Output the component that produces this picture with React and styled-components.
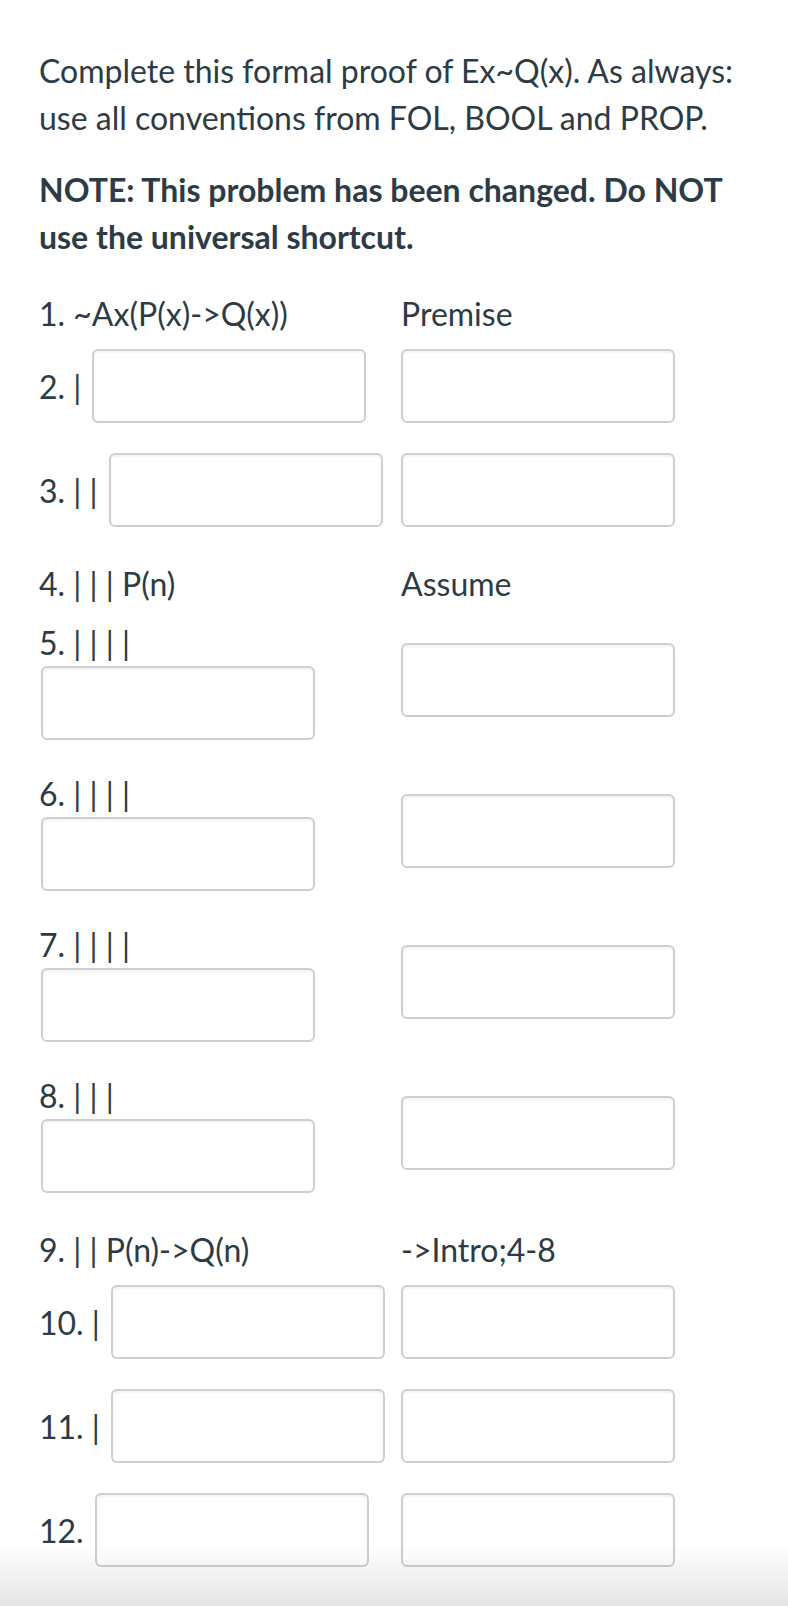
import React from "react";
import styled, { createGlobalStyle } from "styled-components";

const GlobalStyle = createGlobalStyle`
  html, body {
    margin: 0;
    padding: 0;
    background: #ffffff;
  }
  body {
    font-family: Lato, "Open Sans", "Noto Sans", sans-serif;
    color: #2d3b45;
  }
`;

const Page = styled.div`
  padding: 47px 50px 40px 39px;
  font-size: 32px;
  line-height: 47px;
`;

const Paragraph = styled.p`
  margin: 0 0 ${(p) => p.$after}px;
  font-weight: ${(p) => (p.$bold ? 700 : 400)};
`;

const Row = styled.div`
  display: grid;
  grid-template-columns: 362px 1fr;
  align-items: center;
  padding: ${(p) => (p.$text ? "22px 0 0" : "15px 0")};
  line-height: ${(p) => (p.$text ? "40px" : "47px")};
`;

const LeftCell = styled.div`
  display: flex;
  flex-direction: ${(p) => (p.$stack ? "column" : "row")};
  align-items: ${(p) => (p.$stack ? "flex-start" : "center")};
  gap: ${(p) => (p.$stack ? "0" : "9px")};
`;

const Label = styled.span`
  white-space: pre;
`;

const Answer = styled.input`
  box-sizing: border-box;
  width: 274px;
  height: 74px;
  margin: 0;
  padding: 0 12px;
  border: 2px solid #cfcfcf;
  border-radius: 6px;
  background: #ffffff;
  box-shadow: inset 0 2px 2px rgba(0, 0, 0, 0.05);
  font-family: inherit;
  font-size: 24px;
  color: #2d3b45;
  outline: none;
`;

const FormulaInput = styled(Answer)`
  margin-left: 2px;
`;

const RightCell = styled.div`
  display: flex;
  align-items: center;
`;

const BottomFade = styled.div`
  position: fixed;
  left: 0;
  right: 0;
  bottom: 0;
  height: 62px;
  pointer-events: none;
  background: linear-gradient(rgba(0, 0, 0, 0), rgba(0, 0, 0, 0.1));
`;

const steps = [
  { n: "1.", bars: 0, text: "~Ax(P(x)->Q(x))", rule: "Premise" },
  { n: "2.", bars: 1 },
  { n: "3.", bars: 2 },
  { n: "4.", bars: 3, text: "P(n)", rule: "Assume" },
  { n: "5.", bars: 4, stack: true },
  { n: "6.", bars: 4, stack: true },
  { n: "7.", bars: 4, stack: true },
  { n: "8.", bars: 3, stack: true },
  { n: "9.", bars: 2, text: "P(n)->Q(n)", rule: "->Intro;4-8" },
  { n: "10.", bars: 1 },
  { n: "11.", bars: 1 },
  { n: "12.", bars: 0 },
];

function Step({ step }) {
  const bars = Array(step.bars).fill("|").join(" ");
  const label = [step.n, bars, step.text].filter(Boolean).join(" ");
  if (step.rule) {
    return (
      <Row $text>
        <LeftCell>
          <Label>{label}</Label>
        </LeftCell>
        <RightCell>{step.rule}</RightCell>
      </Row>
    );
  }
  return (
    <Row>
      <LeftCell $stack={step.stack}>
        <Label>{label}</Label>
        <FormulaInput type="text" aria-label={`line ${step.n} formula`} />
      </LeftCell>
      <RightCell>
        <Answer type="text" aria-label={`line ${step.n} rule`} />
      </RightCell>
    </Row>
  );
}

export default function App() {
  return (
    <>
      <GlobalStyle />
      <Page>
        <Paragraph $after={25}>
          Complete this formal proof of Ex~Q(x). As always: use all conventions
          from FOL, BOOL and PROP.
        </Paragraph>
        <Paragraph $bold $after={12}>
          NOTE: This problem has been changed. Do NOT use the universal
          shortcut.
        </Paragraph>
        {steps.map((s) => (
          <Step key={s.n} step={s} />
        ))}
      </Page>
      <BottomFade />
    </>
  );
}
